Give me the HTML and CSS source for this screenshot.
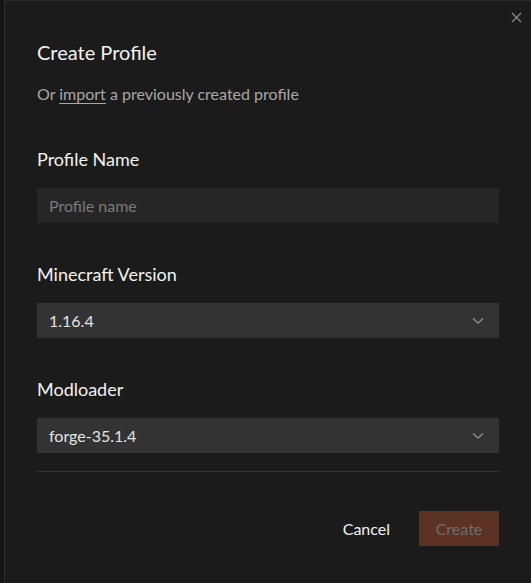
FILE: index.html
```html
<!DOCTYPE html>
<html>
<head>
    <title>Create Profile</title>
    <link rel="stylesheet" href="styles.css">
</head>
<body>
    <div class="modal">
        <button class="close-btn">
            <svg width="11" height="11" viewBox="0 0 11 11"><path d="M1 1L10 10M10 1L1 10" stroke="#8a8a8a" stroke-width="1.2" fill="none"/></svg>
        </button>
        <h1 class="title">Create Profile</h1>
        <p class="subtitle">Or <a href="#">import</a> a previously created profile</p>

        <label class="label first">Profile Name</label>
        <input class="input" type="text" placeholder="Profile name">

        <label class="label">Minecraft Version</label>
        <div class="select">
            <span>1.16.4</span>
            <svg width="12" height="8" viewBox="0 0 12 8"><path d="M1 1.5L6 6L11 1.5" stroke="#8a8a8a" stroke-width="1.6" fill="none"/></svg>
        </div>

        <label class="label">Modloader</label>
        <div class="select">
            <span>forge-35.1.4</span>
            <svg width="12" height="8" viewBox="0 0 12 8"><path d="M1 1.5L6 6L11 1.5" stroke="#8a8a8a" stroke-width="1.6" fill="none"/></svg>
        </div>

        <div class="divider"></div>

        <div class="actions">
            <button class="cancel-btn">Cancel</button>
            <button class="create-btn" disabled>Create</button>
        </div>
    </div>
</body>
</html>
```

FILE: styles.css
```css
body {
    margin: 0;
    background-color: #151515;
    font-family: Lato, "Noto Sans", sans-serif;
    height: 583px;
    overflow: hidden;
}

.modal {
    position: relative;
    margin-left: 4px;
    height: 100%;
    box-sizing: border-box;
    background-color: #1b1b1b;
    border-left: 1px solid #2e2e2e;
    border-top: 1px solid #2e2e2e;
    padding: 38px 32px 0 32px;
    width: 532px;
    display: flex;
    flex-direction: column;
}

.close-btn {
    position: absolute;
    top: 10px;
    right: 14px;
    background: none;
    border: none;
    padding: 0;
    cursor: pointer;
}

.title {
    margin: 0;
    font-size: 20px;
    font-weight: 400;
    color: #f2f2f2;
    line-height: 26px;
}

.subtitle {
    margin: 19px 0 0 0;
    font-size: 16px;
    color: #a8a8a8;
    line-height: 20px;
}

.subtitle a {
    color: #a8a8a8;
    text-decoration: underline;
    text-underline-offset: 3px;
}

.label {
    display: block;
    margin-top: 40px;
    font-size: 18px;
    color: #f2f2f2;
    line-height: 22px;
}

.label.first {
    margin-top: 44px;
}

.input {
    margin-top: 18px;
    width: 462px;
    height: 35px;
    box-sizing: border-box;
    background-color: #262626;
    border: none;
    padding: 0 12px;
    font-family: Lato, "Noto Sans", sans-serif;
    font-size: 16px;
    color: #ddd;
    outline: none;
}

.input::placeholder {
    color: #7a7a7a;
}

.select {
    margin-top: 18px;
    width: 462px;
    height: 35px;
    box-sizing: border-box;
    background-color: #333333;
    padding: 0 15px 0 12px;
    display: flex;
    align-items: center;
    justify-content: space-between;
    font-size: 16px;
    color: #e4e4e4;
}

.divider {
    margin-top: 18px;
    width: 462px;
    height: 1px;
    background-color: #333333;
}

.actions {
    width: 462px;
    margin-top: 39px;
    display: flex;
    justify-content: flex-end;
    align-items: center;
}

.cancel-btn {
    background: none;
    border: none;
    color: #f2f2f2;
    font-family: Lato, "Noto Sans", sans-serif;
    font-size: 16px;
    margin-right: 29px;
    padding: 0;
    cursor: pointer;
}

.create-btn {
    width: 80px;
    height: 35px;
    background-color: #5b3224;
    border: none;
    color: #6e6e6e;
    font-family: Lato, "Noto Sans", sans-serif;
    font-size: 16px;
    padding: 0;
}
```
